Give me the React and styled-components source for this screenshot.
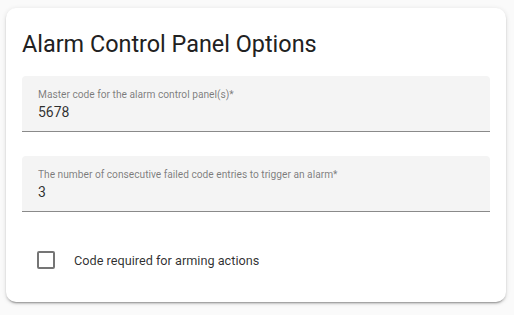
import React from 'react';
import styled, { createGlobalStyle } from 'styled-components';

const GlobalStyle = createGlobalStyle`
  body {
    margin: 0;
    background: #fafafa;
    font-family: Roboto, "Liberation Sans", sans-serif;
  }
`;

const Page = styled.div`
  padding: 8px 6px;
`;

const Card = styled.section`
  width: 500px;
  box-sizing: border-box;
  background: #ffffff;
  border-radius: 10px;
  padding: 20px 16px 22px;
  box-shadow: 0 2px 2px 0 rgba(0, 0, 0, 0.14), 0 1px 5px 0 rgba(0, 0, 0, 0.12),
    0 3px 1px -2px rgba(0, 0, 0, 0.2);
`;

const Title = styled.h1`
  margin: 0 0 16px;
  font-size: 23.4px;
  font-weight: 400;
  line-height: 32px;
  color: #212121;
`;

const Field = styled.div`
  display: flex;
  flex-direction: column;
  height: 56px;
  box-sizing: border-box;
  padding: 11px 16px 0;
  margin-bottom: ${(props) => props.gap || 0}px;
  background: #f4f4f4;
  border-radius: 4px 4px 0 0;
  border-bottom: 1px solid #8a8a8a;
`;

const Label = styled.span`
  font-size: 10.2px;
  line-height: 16px;
  color: rgba(0, 0, 0, 0.5);
`;

const Value = styled.span`
  font-size: 14px;
  line-height: 18px;
  color: rgba(0, 0, 0, 0.82);
`;

const CheckRow = styled.label`
  display: flex;
  align-items: center;
  height: 40px;
  margin-top: 28px;
`;

const CheckWrap = styled.span`
  display: flex;
  align-items: center;
  justify-content: center;
  width: 48px;
  height: 40px;
`;

const Box = styled.span`
  width: 18px;
  height: 18px;
  box-sizing: border-box;
  border: 2px solid #757575;
  border-radius: 2px;
`;

const CheckText = styled.span`
  margin-left: 4px;
  font-size: 12.7px;
  color: rgba(0, 0, 0, 0.82);
`;

export default function App() {
  return (
    <Page>
      <GlobalStyle />
      <Card>
        <Title>Alarm Control Panel Options</Title>
        <Field gap={24}>
          <Label>Master code for the alarm control panel(s)*</Label>
          <Value>5678</Value>
        </Field>
        <Field>
          <Label>The number of consecutive failed code entries to trigger an alarm*</Label>
          <Value>3</Value>
        </Field>
        <CheckRow>
          <CheckWrap>
            <Box />
          </CheckWrap>
          <CheckText>Code required for arming actions</CheckText>
        </CheckRow>
      </Card>
    </Page>
  );
}
